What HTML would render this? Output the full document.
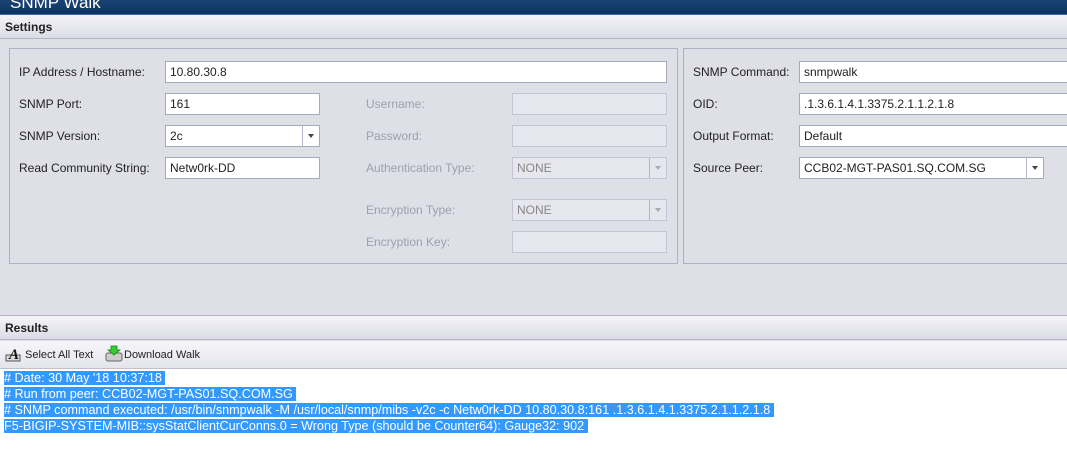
<!DOCTYPE html><html><head><style>
*{margin:0;padding:0;box-sizing:border-box}
body{width:1067px;height:466px;overflow:hidden;background:#dfdfe8;font-family:"Liberation Sans",sans-serif;font-size:12px;color:#222;position:relative}
.a{position:absolute}
.title{left:0;top:0;width:1067px;height:15px;background:linear-gradient(#1b4476,#0d3262);border-bottom:1px solid #3a6aa8;color:#fff;font-size:17px;line-height:6px;padding-left:10px;overflow:hidden}
.hdr{left:0;width:1067px;height:24px;background:linear-gradient(#f4f4f8,#dcdce6);border-bottom:1px solid #b4b4c4;font-weight:bold;font-size:12px;padding:5px 0 0 5px;color:#222}
.fs{border:1px solid #b0b0c4}
.in{background:#fff;border:1px solid #a8a8bc;height:22px;padding:3px 0 0 4px}
.dis{background:#e6e6ee;border:1px solid #c4c4d4;height:22px;padding:3px 0 0 4px;color:#888}
.lb{color:#222}
.dl{color:#a0a0aa}
.dd{position:absolute;right:0;top:0;width:17px;height:20px;border-left:1px solid #b4b4c4}
.dd:after{content:"";position:absolute;left:5px;top:8px;border:3px solid transparent;border-top:4px solid #444}
.dis .dd:after{border-top-color:#aaa}
.sel{background:#3399ff;color:#fff}
</style></head><body>
<div class="a title">SNMP Walk</div>
<div class="a hdr" style="top:15px">Settings</div>
<div class="a fs" style="left:9px;top:48px;width:669px;height:216px"></div>
<div class="a fs" style="left:683px;top:48px;width:390px;height:216px"></div>

<div class="a lb" style="left:19px;top:65px">IP Address / Hostname:</div>
<div class="a in" style="left:165px;top:61px;width:502px">10.80.30.8</div>
<div class="a lb" style="left:19px;top:97px">SNMP Port:</div>
<div class="a in" style="left:165px;top:93px;width:155px">161</div>
<div class="a lb" style="left:19px;top:129px">SNMP Version:</div>
<div class="a in" style="left:165px;top:125px;width:155px">2c<span class="dd"></span></div>
<div class="a lb" style="left:19px;top:161px">Read Community String:</div>
<div class="a in" style="left:165px;top:157px;width:155px">Netw0rk-DD</div>

<div class="a dl" style="left:366px;top:97px">Username:</div>
<div class="a dis" style="left:512px;top:93px;width:155px"></div>
<div class="a dl" style="left:366px;top:129px">Password:</div>
<div class="a dis" style="left:512px;top:125px;width:155px"></div>
<div class="a dl" style="left:366px;top:161px">Authentication Type:</div>
<div class="a dis" style="left:512px;top:157px;width:155px">NONE<span class="dd"></span></div>
<div class="a dl" style="left:366px;top:203px">Encryption Type:</div>
<div class="a dis" style="left:512px;top:199px;width:155px">NONE<span class="dd"></span></div>
<div class="a dl" style="left:366px;top:235px">Encryption Key:</div>
<div class="a dis" style="left:512px;top:231px;width:155px"></div>

<div class="a lb" style="left:693px;top:65px">SNMP Command:</div>
<div class="a in" style="left:799px;top:61px;width:280px">snmpwalk</div>
<div class="a lb" style="left:693px;top:97px">OID:</div>
<div class="a in" style="left:799px;top:93px;width:280px">.1.3.6.1.4.1.3375.2.1.1.2.1.8</div>
<div class="a lb" style="left:693px;top:129px">Output Format:</div>
<div class="a in" style="left:799px;top:125px;width:280px">Default</div>
<div class="a lb" style="left:693px;top:161px">Source Peer:</div>
<div class="a in" style="left:799px;top:157px;width:245px">CCB02-MGT-PAS01.SQ.COM.SG<span class="dd"></span></div>

<div class="a" style="left:0;top:315px;width:1067px;height:1px;background:#b4b4c4"></div>
<div class="a hdr" style="top:316px">Results</div>
<div class="a" style="left:0;top:341px;width:1067px;height:28px;background:linear-gradient(#f6f6fa,#e4e4ec);border-bottom:1px solid #c0c0cc"></div>
<svg class="a" style="left:5px;top:346px" width="18" height="16"><rect x="1" y="9" width="14" height="6" fill="#ddd" stroke="#555"/><text x="4" y="13" font-family="Liberation Serif" font-style="italic" font-weight="bold" font-size="15" fill="#111">A</text></svg>
<div class="a" style="left:25px;top:349px;font-size:11px">Select All Text</div>
<svg class="a" style="left:105px;top:345px" width="18" height="17"><rect x="1" y="8" width="16" height="8" rx="2" fill="#ccc" stroke="#666"/><path d="M6 1h6v4h3l-6 5-6-5h3z" fill="#3c3" stroke="#080" stroke-width=".7"/></svg>
<div class="a" style="left:124px;top:349px;font-size:11px">Download Walk</div>
<div class="a" style="left:0;top:369px;width:1067px;height:97px;background:#fff"></div>
<div class="a" style="left:4px;top:370px;line-height:16px;font-size:12.6px">
<span class="sel"># Date: 30 May '18 10:37:18&nbsp;</span><br>
<span class="sel"># Run from peer: CCB02-MGT-PAS01.SQ.COM.SG&nbsp;</span><br>
<span class="sel"># SNMP command executed: /usr/bin/snmpwalk -M /usr/local/snmp/mibs -v2c -c Netw0rk-DD 10.80.30.8:161 .1.3.6.1.4.1.3375.2.1.1.2.1.8&nbsp;</span><br>
<span class="sel">F5-BIGIP-SYSTEM-MIB::sysStatClientCurConns.0 = Wrong Type (should be Counter64): Gauge32: 902&nbsp;</span>
</div>
</body></html>
